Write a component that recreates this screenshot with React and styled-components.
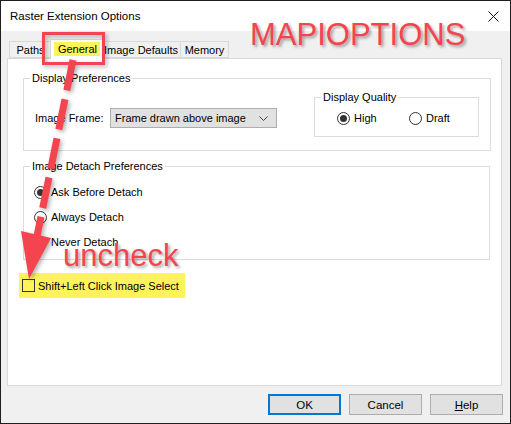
import React from 'react'
import styled, { createGlobalStyle } from 'styled-components';

const GlobalStyle = createGlobalStyle`
    html, body {
        margin: 0;
        padding: 0;
        background: #ffffff;
    }
    body {
        font-family: "Liberation Sans", Arial, sans-serif;
        font-size: 11px;
        color: #000;
        white-space: nowrap;
    }
    * {
        box-sizing: border-box;
    }
`

const Window = styled.div`
    position: relative;
    width: 511px;
    height: 424px;
    border: 1px solid #1e1e1e;
    background: #f0f0f0;
    display: flex;
    flex-direction: column;
    overflow: hidden;
`

const TitleBar = styled.div`
    height: 30px;
    background: #fff;
    display: flex;
    align-items: center;
    justify-content: space-between;
    padding: 0 10px 0 9px;
    font-size: 11.5px;
`

const CloseButton = styled.span`
    display: flex;
    align-items: center;
    margin-right: 1px;
`

const Body = styled.div`
    flex: 1;
    padding: 8px 7px 0 6px;
    display: flex;
    flex-direction: column;
`

const TabStrip = styled.div`
    display: flex;
    align-items: flex-end;
    padding-left: 2px;
    height: 19px;
    position: relative;
    z-index: 1;
`

const Tab = styled.div`
    width: ${p => p.width}px;
    height: ${p => p.active ? 20 : 17}px;
    margin: ${p => p.active ? '0 -2px -1px -2px' : '0'};
    background: ${p => p.active ? '#fff' : '#f0f0f0'};
    border: 1px solid #d9d9d9;
    border-bottom: ${p => p.active ? 'none' : '1px solid #d9d9d9'};
    border-left: ${p => p.first || p.active ? '1px solid #d9d9d9' : 'none'};
    position: relative;
    z-index: ${p => p.active ? 2 : 1};
    display: flex;
    justify-content: center;
    padding-top: ${p => p.active ? 2 : 1}px;
    line-height: 14px;
`

const TabHighlight = styled.span`
    background: #fff35c;
    padding: 0 3px 0 4px;
    height: 14px;
`

const Panel = styled.div`
    width: 495px;
    height: 328px;
    background: #fff;
    border: 1px solid #d9d9d9;
    padding: 12px 0 0 15px;
`

const Group = styled.fieldset`
    margin: ${p => p.mt || 0}px 0 0 0;
    padding: 0;
    min-width: 0;
    width: ${p => p.width}px;
    height: ${p => p.height}px;
    border: 1px solid #dcdcdc;
    flex-shrink: 0;
`

const Legend = styled.legend`
    margin-left: 6px;
    padding: 0 2px;
    line-height: 14px;
    height: 14px;
`

const GroupRow = styled.div`
    display: flex;
    align-items: flex-start;
    padding: 0 11px 0 11px;
`

const FrameRow = styled.div`
    display: flex;
    align-items: center;
    margin-top: 23px;
`

const FieldLabel = styled.span`
    width: 75px;
    line-height: 14px;
`

const Combo = styled.div`
    width: 167px;
    height: 20px;
    background: #e1e1e1;
    border: 1px solid #adadad;
    display: flex;
    align-items: center;
    justify-content: space-between;
    padding: 0 8px 0 4px;
`

const RadioRow = styled.div`
    display: flex;
    flex-direction: ${p => p.column ? 'column' : 'row'};
    gap: ${p => p.gap || 0}px;
    padding: ${p => p.pad};
`

const Option = styled.label`
    display: flex;
    align-items: center;
    width: ${p => p.width ? p.width + 'px' : 'auto'};
    height: 16px;
    gap: 4px;
    line-height: 14px;
`

const RadioCircle = styled.span`
    width: 13px;
    height: 13px;
    border-radius: 50%;
    border: 1px solid #333;
    background: #fff;
    display: flex;
    align-items: center;
    justify-content: center;
    flex-shrink: 0;
    &::after {
        content: '';
        width: 7px;
        height: 7px;
        border-radius: 50%;
        background: ${p => p.checked ? '#333' : 'transparent'};
    }
`

const CheckRow = styled.div`
    display: flex;
    align-items: center;
    align-self: flex-start;
    margin: 13px 0 0 -4px;
    height: 25px;
    padding: 0 6px 0 3px;
    gap: 3px;
    background: #fff35c;
    line-height: 14px;
`

const CheckBox = styled.span`
    width: 13px;
    height: 13px;
    border: 1px solid #333;
    background: transparent;
    flex-shrink: 0;
`

const PanelContent = styled.div`
    display: flex;
    flex-direction: column;
`

const ButtonRow = styled.div`
    display: flex;
    justify-content: flex-end;
    gap: 8px;
    margin-top: 8px;
`

const Button = styled.button`
    width: 73px;
    height: 21px;
    background: #e1e1e1;
    border: ${p => p.primary ? '2px solid #0078d7' : '1px solid #adadad'};
    font-family: inherit;
    font-size: 11.5px;
    color: #000;
    padding: 0;
    u { text-decoration: underline; }
`

const Annotation = styled.div`
    position: absolute;
    left: ${p => p.x}px;
    top: ${p => p.y}px;
    font-family: "Liberation Sans", Arial, sans-serif;
    font-size: 31px;
    line-height: 1;
    color: #f4444f;
    text-shadow: 2px 2px 3px rgba(0, 0, 0, 0.35);
    z-index: 5;
`

const Overlay = styled.svg`
    position: absolute;
    left: -1px;
    top: -1px;
    width: 511px;
    height: 424px;
    pointer-events: none;
    z-index: 4;
    overflow: visible;
`

function Radio({ label, checked, width }) {
    return (
        <Option width={width}>
            <RadioCircle checked={checked} />
            <span>{label}</span>
        </Option>
    )
}

export default function App() {
    const tabs = [
        { title: 'Paths', width: 43 },
        { title: 'General', width: 54, active: true },
        { title: 'Image Defaults', width: 79 },
        { title: 'Memory', width: 48 },
    ]

    return (
        <>
            <GlobalStyle />
            <Window>
                <TitleBar>
                    <span>Raster Extension Options</span>
                    <CloseButton>
                        <svg width="11" height="11" viewBox="0 0 11 11">
                            <path d="M0.5 0.5 L10.5 10.5 M10.5 0.5 L0.5 10.5" stroke="#111" strokeWidth="1" fill="none" />
                        </svg>
                    </CloseButton>
                </TitleBar>
                <Body>
                    <TabStrip>
                        {tabs.map((t, i) => (
                            <Tab key={t.title} width={t.width} active={t.active} first={i === 0}>
                                {t.active ? <TabHighlight>{t.title}</TabHighlight> : t.title}
                            </Tab>
                        ))}
                    </TabStrip>
                    <Panel>
                        <PanelContent>
                            <Group width={468} height={80}>
                                <Legend>Display Preferences</Legend>
                                <GroupRow>
                                    <FrameRow>
                                        <FieldLabel>Image Frame:</FieldLabel>
                                        <Combo>
                                            <span>Frame drawn above image</span>
                                            <svg width="9" height="5" viewBox="0 0 9 5">
                                                <path d="M0.5 0.5 L4.5 4.5 L8.5 0.5" stroke="#444" strokeWidth="1" fill="none" />
                                            </svg>
                                        </Combo>
                                    </FrameRow>
                                    <Group width={165} height={47} mt={5} style={{ marginLeft: 'auto' }}>
                                        <Legend>Display Quality</Legend>
                                        <RadioRow pad="6px 0 0 22px">
                                            <Radio label="High" checked width={72} />
                                            <Radio label="Draft" />
                                        </RadioRow>
                                    </Group>
                                </GroupRow>
                            </Group>
                            <Group width={467} height={101} mt={8}>
                                <Legend>Image Detach Preferences</Legend>
                                <RadioRow column gap={9} pad="11px 0 0 10px">
                                    <Radio label="Ask Before Detach" checked />
                                    <Radio label="Always Detach" />
                                    <Radio label="Never Detach" />
                                </RadioRow>
                            </Group>
                            <CheckRow>
                                <CheckBox />
                                <span>Shift+Left Click Image Select</span>
                            </CheckRow>
                        </PanelContent>
                    </Panel>
                    <ButtonRow>
                        <Button primary>OK</Button>
                        <Button>Cancel</Button>
                        <Button><u>H</u>elp</Button>
                    </ButtonRow>
                </Body>

                <Overlay viewBox="0 0 511 424">
                    <g style={{ filter: 'drop-shadow(2px 2px 2px rgba(0,0,0,0.3))' }}>
                        <rect x="43.5" y="33.5" width="60" height="30" fill="none" stroke="#f4444f" strokeWidth="3" />
                        <line x1="73" y1="60" x2="37" y2="236" stroke="#f4444f" strokeWidth="7" strokeDasharray="31 9" />
                        <polygon points="29,279 21,231 51,238" fill="#f4444f" />
                    </g>
                </Overlay>
                <Annotation x={249} y={18}>MAPIOPTIONS</Annotation>
                <Annotation x={62} y={239}>uncheck</Annotation>
            </Window>
        </>
    )
}
